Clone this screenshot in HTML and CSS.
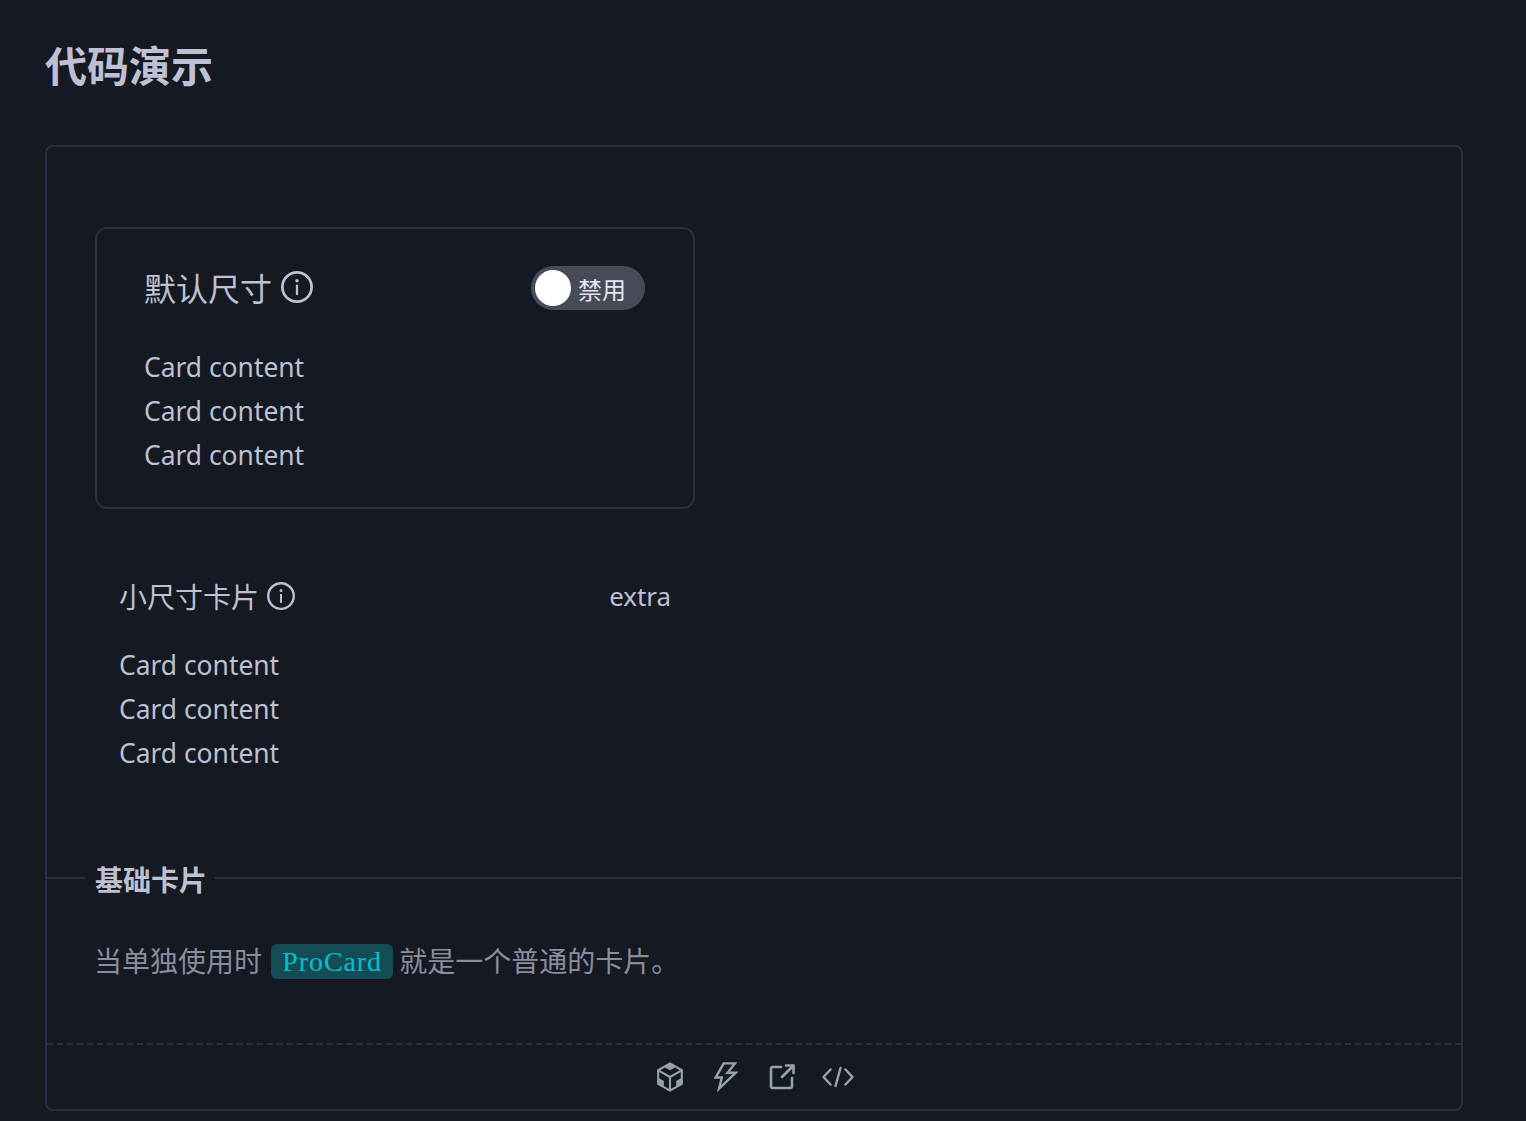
FILE: index.html
```html
<!DOCTYPE html>
<html lang="zh">
<head>
    <meta charset="UTF-8">
    <meta name="viewport" content="width=device-width, initial-scale=1.0">
    <title>代码演示</title>
    <link rel="stylesheet" href="styles.css">
</head>
<body>
    <h2 class="page-title">代码演示</h2>

    <section class="demo">
        <div class="demo-preview">
            <div class="card">
                <div class="card-head">
                    <div class="card-title">
                        默认尺寸
                        <svg class="info-icon" viewBox="64 64 896 896" fill="currentColor"><path d="M512 64C264.6 64 64 264.6 64 512s200.6 448 448 448 448-200.6 448-448S759.4 64 512 64zm0 820c-205.4 0-372-166.6-372-372s166.6-372 372-372 372 166.6 372 372-166.6 372-372 372z"/><path d="M464 336a48 48 0 1096 0 48 48 0 10-96 0zm72 112h-48c-4.4 0-8 3.6-8 8v272c0 4.4 3.6 8 8 8h48c4.4 0 8-3.6 8-8V456c0-4.4-3.6-8-8-8z"/></svg>
                    </div>
                    <button class="switch"><span class="switch-handle"></span><span class="switch-label">禁用</span></button>
                </div>
                <div class="card-body">
                    <p>Card content</p>
                    <p>Card content</p>
                    <p>Card content</p>
                </div>
            </div>

            <div class="card card-small">
                <div class="card-head">
                    <div class="card-title">
                        小尺寸卡片
                        <svg class="info-icon" viewBox="64 64 896 896" fill="currentColor"><path d="M512 64C264.6 64 64 264.6 64 512s200.6 448 448 448 448-200.6 448-448S759.4 64 512 64zm0 820c-205.4 0-372-166.6-372-372s166.6-372 372-372 372 166.6 372 372-166.6 372-372 372z"/><path d="M464 336a48 48 0 1096 0 48 48 0 10-96 0zm72 112h-48c-4.4 0-8 3.6-8 8v272c0 4.4 3.6 8 8 8h48c4.4 0 8-3.6 8-8V456c0-4.4-3.6-8-8-8z"/></svg>
                    </div>
                    <span class="card-extra">extra</span>
                </div>
                <div class="card-body">
                    <p>Card content</p>
                    <p>Card content</p>
                    <p>Card content</p>
                </div>
            </div>
        </div>

        <div class="demo-meta">
            <div class="demo-divider"><span>基础卡片</span></div>
            <p class="demo-desc">当单独使用时 <code>ProCard</code> 就是一个普通的卡片。</p>
        </div>

        <div class="demo-actions">
            <svg class="action-icon action-wide" viewBox="64 64 896 896" fill="currentColor"><path d="M709.6 210l.4-.2h.2L512 96 313.9 209.8h-.2l.7.3L151.5 304v416L512 928l360.5-208V304l-162.9-94zM482.7 843.6L339.6 761V621.4L210 547.8V372.9l272.7 157.3v313.4zM238.2 321.5l134.7-77.8 138.9 79.7 139.1-79.9 135.2 78-273.9 158-274-158zM814 548.3l-128.8 73.1v139.1l-143.9 83V530.4L814 373.1v175.2z"/></svg>
            <svg class="action-icon action-wide" viewBox="64 64 896 896" fill="currentColor"><path d="M848 359.3H627.7L825.8 109c4.1-5.3.4-13-6.3-13H436c-2.8 0-5.5 1.5-6.9 4L170 547.5c-3.1 5.3.7 12 6.9 12h174.4l-89.4 357.6c-1.9 7.8 7.5 13.3 13.3 7.7L853.5 373c5.2-4.9 1.7-13.7-5.5-13.7zM378.2 732.5l60.3-241H281.1l189.6-327.4h224.6L487 427.4h211L378.2 732.5z"/></svg>
            <svg class="action-icon" viewBox="0 0 28 28" fill="none" stroke="currentColor" stroke-width="2.6" stroke-linecap="round" stroke-linejoin="round"><path d="M13 4H4.5A1.5 1.5 0 0 0 3 5.5v18A1.5 1.5 0 0 0 4.500 25h18a1.500 1.500 0 0 0 1.500-1.500V15"/><path d="M14 14L25 3"/><path d="M18 2.500h7.500V10"/></svg>
            <svg class="action-icon action-code" viewBox="0 0 32 28" fill="none" stroke="currentColor" stroke-width="2.5" stroke-linecap="round" stroke-linejoin="round"><path d="M8.500 6.500L1.500 14l7 7.500"/><path d="M23.500 6.500l7 7.500-7 7.500"/><path d="M18.500 5l-5 18"/></svg>
        </div>
    </section>
</body>
</html>
```

FILE: styles.css
```css
* {
    box-sizing: border-box;
}
body {
    margin: 0;
    padding: 0 63px 0 45px;
    height: 1121px;
    overflow: hidden;
    background-color: #141922;
    color: #bfc0d3;
    font-family: 'Noto Sans', 'Noto Sans CJK SC', sans-serif;
    font-size: 28px;
}
.page-title {
    margin: 0;
    padding-top: 36px;
    height: 145px;
    font-size: 42px;
    line-height: 60px;
    font-weight: 700;
}
.demo {
    height: 966px;
    border: 2px solid #2a3043;
    border-radius: 8px;
}
.demo-preview {
    padding: 80px 48px 0;
    height: 711px;
}
.card {
    width: 600px;
    height: 282px;
    padding: 35px 48px 0 47px;
    border: 2px solid #2a3043;
    border-radius: 12px;
}
.card-head {
    display: flex;
    justify-content: space-between;
    align-items: center;
    height: 48px;
}
.card-title {
    display: flex;
    align-items: center;
    gap: 9px;
    padding-bottom: 2px;
    font-size: 32px;
}
.info-icon {
    width: 32px;
    height: 32px;
}
.switch {
    display: flex;
    align-items: center;
    width: 114px;
    height: 44px;
    padding: 0 4px;
    border: none;
    border-radius: 22px;
    background-color: #474a58;
    color: #e6e6ee;
    font-family: inherit;
    font-size: 24px;
}
.switch-handle {
    width: 36px;
    height: 36px;
    border-radius: 50%;
    background-color: #fff;
}
.switch-label {
    margin-left: 7px;
}
.card-body {
    padding-top: 33px;
}
.card-body p {
    margin: 0;
    font-size: 26.400px;
    line-height: 44px;
}
.card-small {
    height: 262px;
    margin-top: 47px;
    padding: 0 24px;
    border: none;
}
.card-small .card-head {
    height: 80px;
}
.card-small .card-title {
    gap: 8px;
    padding-bottom: 0;
    font-size: 28px;
}
.card-small .info-icon {
    width: 28px;
    height: 28px;
}
.card-small .card-body {
    padding-top: 7px;
}
.card-extra {
    font-size: 25.900px;
}
.demo-divider {
    display: flex;
    align-items: center;
    gap: 10px;
    font-weight: 700;
    line-height: 40px;
}
.demo-divider::before,
.demo-divider::after {
    content: "";
    height: 2px;
    background-color: #2a3043;
}
.demo-divider::before {
    width: 38px;
}
.demo-divider::after {
    flex: 1;
}
.demo-divider span {
    position: relative;
    top: 2px;
    margin-right: -2px;
}
.demo-desc {
    margin: 0;
    padding: 41px 48px 0 47px;
    height: 145px;
    line-height: 44px;
    color: #8b8c9e;
}
.demo-desc code {
    display: inline-block;
    margin: 0 -1px 0 2px;
    padding: 0 11px;
    border-radius: 6px;
    background-color: #144c55;
    color: #00c2ce;
    font-family: 'Liberation Serif', 'Noto Sans CJK SC', serif;
    font-size: 28px;
    letter-spacing: 0.9px;
    line-height: 35px;
    vertical-align: 1px;
}
.demo-actions {
    display: flex;
    justify-content: center;
    align-items: center;
    gap: 28px;
    height: 66px;
    border-top: 2px dashed #2a3043;
    color: #98a2a8;
}
.action-icon {
    width: 28px;
    height: 28px;
}
.action-wide {
    width: 32px;
    height: 32px;
    margin: 0 -2px;
}
.action-code {
    width: 32px;
    margin: 0 -2px;
}
```
